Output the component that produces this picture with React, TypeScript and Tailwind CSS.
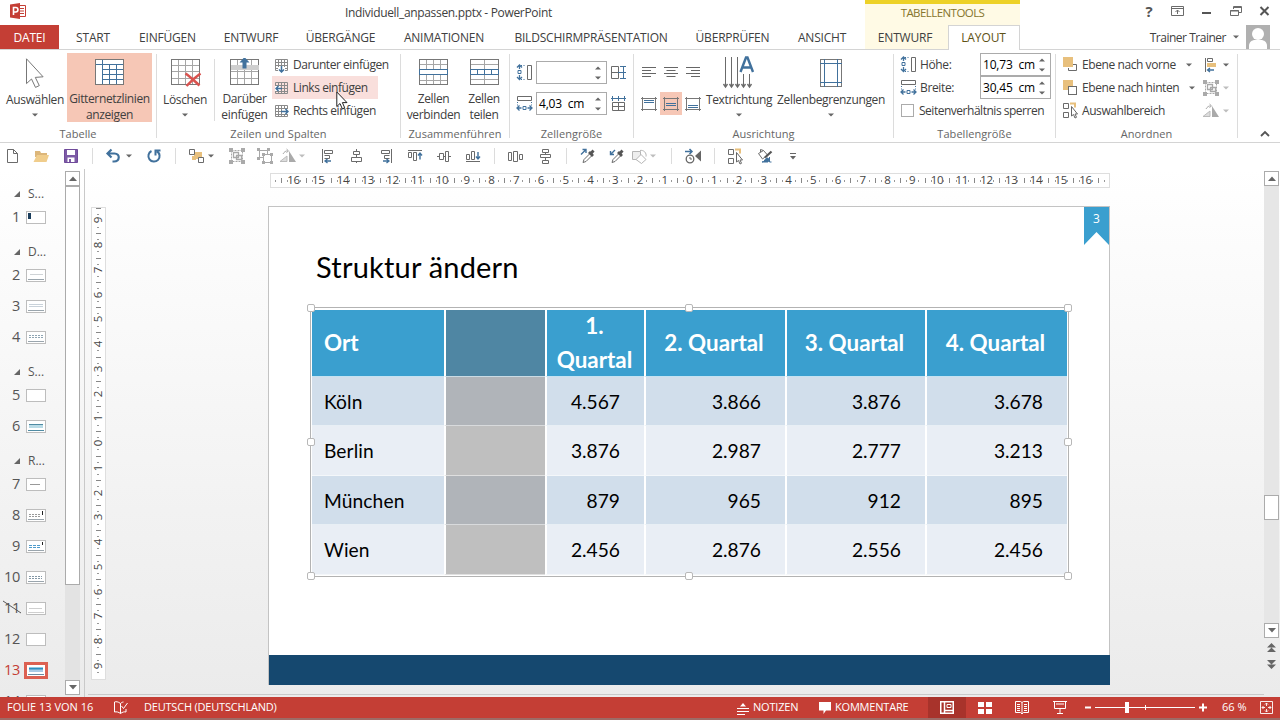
import React from 'react';
import clsx from 'clsx';

const GREY = '#6b6b6b';
const BLUE = '#41719c';
const SAND = '#e8c07d';

/* ---------- small helpers ---------- */

type IconProps = {
  w?: number;
  h?: number;
  className?: string;
  children: React.ReactNode;
};

const Icon: React.FC<IconProps> = ({ w = 16, h = 16, className, children }) => (
  <svg
    width={w}
    height={h}
    viewBox={`0 0 ${w} ${h}`}
    fill="none"
    stroke={GREY}
    className={clsx('block shrink-0', className)}
  >
    {children}
  </svg>
);

const Caret: React.FC<{ className?: string; light?: boolean }> = ({
  className,
  light,
}) => (
  <svg
    width="6"
    height="4"
    viewBox="0 0 6 4"
    className={clsx('block shrink-0', className)}
  >
    <path d="M0 0.4h6L3 3.6z" fill={light ? '#bdbdbd' : '#666'} />
  </svg>
);

/* ---------- ribbon icons ---------- */

const GridIcon: React.FC<{ children?: React.ReactNode; lines?: string }> = ({
  children,
  lines = 'M7.5 1v25M14.5 1v25M21.5 1v25M1 7.5h28M1 13.5h28M1 20.5h28',
}) => (
  <Icon w={32} h={32} className="ml-[3px]">
    <rect x="0.5" y="1.5" width="28" height="25" fill="#fff" stroke="#777" />
    <path d={lines} stroke="#a6a6a6" />
    <rect x="0.5" y="1.5" width="28" height="25" stroke="#777" />
    {children}
  </Icon>
);

const PointerIcon = () => (
  <Icon w={20} h={32}>
    <path
      d="M1.5 0.8v24.8l5-4.6 4 8.4 3.8-1.8-4-8.2 7.8-.6z"
      stroke="#777"
      fill="#fff"
    />
  </Icon>
);

const GridlinesIcon = () => (
  <Icon w={32} h={32} className="ml-[3px]">
    <rect x="0.5" y="1.5" width="28" height="25" fill="#fff" />
    <path
      d="M1 6.5h27M7.5 2v24M14.5 6.5v20M21.5 6.5v20M7.5 11.5H28M7.5 16.5H28M7.5 21.5H28"
      stroke={BLUE}
    />
    <rect x="0.5" y="1.5" width="28" height="25" stroke="#777" />
  </Icon>
);

const DeleteIcon = () => (
  <GridIcon>
    <path
      d="M14.5 15.5c5 3.5 9 7.5 14 12M29.5 15.5c-5 3.5-9.5 7.5-14 12.5"
      stroke="#d9534f"
      strokeWidth="2.6"
    />
  </GridIcon>
);

const InsertAboveIcon = () => (
  <GridIcon>
    <rect x="1" y="7" width="28" height="5" fill="#cfcfcf" stroke="none" />
    <path d="M14.5 -1l5 5.5h-3v6h-4v-6h-3z" fill={BLUE} stroke="none" />
  </GridIcon>
);

const MergeIcon = () => (
  <GridIcon lines="M7.5 2v9M14.5 2v9M21.5 2v9M7.5 17v10M14.5 17v10M21.5 17v10M1 6.5h28M1 22.5h28">
    <rect x="0.5" y="11.5" width="28" height="5" fill="#fff" stroke={BLUE} />
  </GridIcon>
);

const SplitIcon = () => (
  <GridIcon lines="M14.5 2v9M14.5 17v10M1 6.5h28M1 21.5h28">
    <path
      d="M.5 11.5h28v5H.5zM7.5 11.5v5M14.5 11.5v5M21.5 11.5v5"
      stroke={BLUE}
    />
  </GridIcon>
);

const SmallGrid: React.FC<{
  arrow: string;
  x: number;
  y: number;
  w: number;
  h: number;
}> = ({ arrow, x, y, w, h }) => (
  <Icon w={14} h={15}>
    <path
      d="M.5 1.5h12v11H.5zM3.5 1.5v11M6.5 1.5v11M9.5 1.5v11M.5 4.5h12M.5 7.5h12M.5 10.5h12"
      stroke="#8a8a8a"
    />
    <rect x={x} y={y} width={w} height={h} fill="#fff" stroke="none" />
    <path d={arrow} stroke={BLUE} strokeWidth="1.5" />
  </Icon>
);

const RowHeightIcon = () => (
  <Icon w={17} h={17}>
    <path d="M11.5 1.5h4v14h-4z" />
    <path d="M5 1.5h5M5 15.5h5" strokeDasharray="1 1.5" stroke={BLUE} />
    <path d="M2 6.5h3v3H2z" stroke={BLUE} />
    <path
      d="M3.5 5V1M1 3.5L3.5 1 6 3.5M3.5 11v5M1 13l2.5 2.5L6 13"
      stroke={BLUE}
      strokeWidth="1.3"
    />
  </Icon>
);

const ColWidthIcon = () => (
  <Icon w={17} h={17}>
    <path d="M1.5 1.5h14v4h-14z" />
    <path d="M1.5 7v4M15.5 7v4" strokeDasharray="1 1.5" stroke={BLUE} />
    <path d="M7 11.5h3v3H7z" stroke={BLUE} />
    <path
      d="M5.5 13H1M3.5 10.5L1 13l2.5 2.5M11.5 13H16M13.5 10.5L16 13l-2.5 2.5"
      stroke={BLUE}
      strokeWidth="1.3"
    />
  </Icon>
);

const DistributeRowsIcon = () => (
  <Icon w={17} h={17}>
    <path d="M1.5 2.5h7v12h-7zM1.5 8.5h7" />
    <path d="M10 2.5h6M8 8.5h8M10 14.5h6M13.5 2v13" stroke={BLUE} />
  </Icon>
);

const DistributeColsIcon = () => (
  <Icon w={17} h={17}>
    <path d="M2.5 7.5h12v8h-12zM8.5 7.5v8M2.5 11.5h12" />
    <path d="M2.5 1v5M8.5 1v5M14.5 1v5M1 3.5h15" stroke={BLUE} />
  </Icon>
);

const AlignLines: React.FC<{ d: string }> = ({ d }) => (
  <Icon w={16} h={14}>
    <path d={d} stroke="#666" />
  </Icon>
);

const VAlign: React.FC<{ d: string }> = ({ d }) => (
  <Icon w={16} h={16}>
    <path d="M1.5 1v14M14.5 1v14M0 2.5h16M0 13.5h16" stroke="#777" />
    <path d={d} stroke={BLUE} />
  </Icon>
);

const TextDirectionIcon = () => (
  <Icon w={34} h={34}>
    <path d="M3.5 1v29M9.5 1v29M15.5 1v29M21.5 18v12M27.5 18v12" />
    <path
      d="M1.5 28l2 3 2-3M7.5 28l2 3 2-3M13.5 28l2 3 2-3M19.5 28l2 3 2-3M25.5 28l2 3 2-3"
      strokeWidth="1.4"
    />
    <path
      d="M18.5 16L24 1.5h1.5L31 16M20.5 11.500h8.500"
      stroke={BLUE}
      strokeWidth="2.4"
    />
  </Icon>
);

const MarginsIcon = () => (
  <Icon w={25} h={32}>
    <rect x="1.5" y="1.5" width="21" height="27" stroke="#777" fill="#fff" />
    <path d="M5.5 1v28M18.5 1v28M1 5.5h22M1 24.5h22" stroke={BLUE} />
  </Icon>
);

const BringForwardIcon = () => (
  <Icon w={17} h={16}>
    <path d="M6.5 11v2.5h8v-6h-4" />
    <rect x="1" y="0" width="10" height="10" fill={SAND} stroke="none" />
  </Icon>
);

const SendBackwardIcon = () => (
  <Icon w={17} h={16}>
    <rect x="1" y="0" width="10" height="10" fill={SAND} stroke="none" />
    <rect x="6.5" y="6.5" width="8" height="8" fill="#fff" />
  </Icon>
);

const SelectionPaneIcon = () => (
  <Icon w={17} h={17}>
    <path d="M1.5 1.5h5v5h-5zM1.5 10.5h5v5h-5z" />
    <path d="M8 1.5h5v4" stroke={SAND} strokeWidth="2" />
    <path
      d="M9.5 4.5v9.5l2-1.5 1.5 3.5 1.5-.7-1.5-3.3h2.5z"
      fill="#fff"
      stroke="#666"
    />
  </Icon>
);

const AlignObjectsIcon = () => (
  <Icon w={16} h={16}>
    <path d="M2.5 1v14M4.5 1.5h5v3h-5z" />
    <rect x="4" y="6" width="9" height="4" fill={SAND} stroke="none" />
    <path d="M11 13H5M7 11l-2.5 2L7 15" stroke={BLUE} strokeWidth="1.3" />
  </Icon>
);

const GroupIcon = () => (
  <Icon>
    <g stroke="#a8a8a8">
      <path d="M2.5 2.5h11v11h-11z" strokeDasharray="2 1" />
      <path d="M4.5 4.5h5v5h-5zM7.5 7.5h5v4h-5z" strokeWidth="1.3" />
      <path
        d="M0 0h4v4H0zM12 0h4v4h-4zM0 12h4v4H0zM12 12h4v4h-4z"
        fill="#aaa"
        stroke="none"
      />
    </g>
  </Icon>
);

const RegroupIcon = () => (
  <Icon>
    <g stroke="#a8a8a8">
      <path d="M2.5 2.5h8v7h-8z" />
      <path d="M6.5 6.5h8v8h-8z" fill="#fff" />
      <path
        d="M0 0h3v3H0zM10 0h3v3h-3zM0 9h3v3H0zM5 5h3v3H5zM13 5h3v3h-3zM5 13h3v3H5zM13 13h3v3h-3z"
        fill="#aaa"
        stroke="none"
      />
    </g>
  </Icon>
);

const RotateIcon = () => (
  <Icon>
    <path d="M0 13.5h7V8z" fill="#ddd" stroke="#bbb" />
    <path d="M9 3v11h7z" fill="#aaa" stroke="none" />
    <path d="M3 6c1-2 3-3.5 5-3M6.5 1l2 1.8-2 2" stroke="#aaa" />
  </Icon>
);

/* ---------- title bar and tabs ---------- */

const TitleBar = () => (
  <header className="flex h-[25px] items-stretch">
    <div className="w-[345px] pl-[9px] pt-[2px]">
      <Icon w={18} h={18}>
        <path d="M8 3.5h8.5v11H8" fill="#fff" stroke="#c43e35" />
        <path d="M11 6.5h4M11 9h4M11 11.5h4" stroke="#c43e35" />
        <path d="M1 2.5L11 1v16L1 15.5z" fill="#c43e35" stroke="none" />
        <path
          d="M4.5 13V5.5h2.2a2.2 2.2 0 0 1 0 4.5H4.5"
          stroke="#fff"
          strokeWidth="1.6"
        />
      </Icon>
    </div>
    <div className="w-[520px] pt-[5px] leading-4 tracking-[-0.33px]">
      Individuell_anpassen.pptx - PowerPoint
    </div>
    <div className="w-[155px] border-t-4 border-[#edd127] bg-[#fffae5] pt-px text-center text-[11.5px] leading-4 tracking-[-0.56px] text-[#86752c]">
      TABELLENTOOLS
    </div>
    <div className="flex flex-1 items-start justify-end gap-[13px] pr-[7px] pt-[3px]">
      <span className="w-4 text-center text-[15px] font-bold leading-4 text-[#555]">
        ?
      </span>
      <Icon>
        <path d="M1.5 3.5h12v9h-12zM1.5 5.5h12M7.5 11V7M5.5 9l2-2 2 2" />
      </Icon>
      <Icon>
        <path d="M3 10h9" stroke="#555" strokeWidth="2" />
      </Icon>
      <Icon>
        <path d="M5.5 6V3.5h8v6H11M5 4.5h9M2.5 7.5h8v5h-8zM2 8h9" />
      </Icon>
      <Icon>
        <path d="M3.5 4l8 8M11.500 4l-8 8" stroke="#555" strokeWidth="2" />
      </Icon>
    </div>
  </header>
);

const tabs = [
  { label: 'START', width: 'w-[70px]' },
  { label: 'EINFÜGEN', width: 'w-[79px]' },
  { label: 'ENTWURF', width: 'w-[88px]' },
  { label: 'ÜBERGÄNGE', width: 'w-[91px]' },
  { label: 'ANIMATIONEN', width: 'w-[116px]' },
  { label: 'BILDSCHIRMPRÄSENTATION', width: 'w-[178px]' },
  { label: 'ÜBERPRÜFEN', width: 'w-[105px]' },
  { label: 'ANSICHT', width: 'w-[74px]' },
];

const TabBar = () => (
  <nav className="flex h-[25px] border-b border-[#d4d4d4] text-center leading-[25px] tracking-[-0.2px]">
    <div className="w-[59px] bg-[#c43e35] text-white">DATEI</div>
    {tabs.map((tab, i) => (
      <div
        key={tab.label}
        className={clsx('whitespace-nowrap', tab.width, i === 0 && '-ml-px')}
      >
        {tab.label}
      </div>
    ))}
    <div className="ml-[6px] w-[83px] bg-[#fffae5] pr-[3px]">ENTWURF</div>
    <div className="h-[25px] w-[72px] border-x border-t border-[#d4d4d4] bg-white pr-px leading-[23px] tracking-[-0.1px] text-[#5f5216]">
      LAYOUT
    </div>
    <div className="flex flex-1 items-center justify-end pr-[10px]">
      <span className="tracking-[-0.48px]">Trainer Trainer</span>
      <Caret className="ml-[7px] mr-[7px]" />
      <svg width="24" height="24" viewBox="0 0 24 24" className="block">
        <rect width="24" height="24" fill="#b0b0b0" />
        <circle cx="12" cy="9" r="6" fill="#fff" />
        <path d="M3 24v-3c0-4 3-6 6-6h6c3 0 6 2 6 6v3z" fill="#fff" />
      </svg>
    </div>
  </nav>
);

/* ---------- ribbon ---------- */

const Group: React.FC<{
  label: string;
  width: string;
  children: React.ReactNode;
}> = ({ label, width, children }) => (
  <section className={clsx('flex h-[92px] shrink-0 py-1', width)}>
    <div className="flex min-w-0 flex-1 flex-col border-r border-[#dcdcdc]">
      <div className="-mt-px flex h-[73px] shrink-0 items-start">
        {children}
      </div>
      <div className="h-4 shrink-0 text-center text-[11px] leading-4 tracking-[0.05px] text-[#666]">
        {label}
      </div>
    </div>
  </section>
);

const BigButton: React.FC<{
  icon: React.ReactNode;
  lines: string[];
  className: string;
}> = ({ icon, lines, className }) => (
  <button
    className={clsx(
      'flex h-[69px] shrink-0 flex-col items-center whitespace-nowrap leading-4',
      className
    )}
  >
    <span className="flex h-[38px] items-start pt-[5px]">{icon}</span>
    <span className="mt-px">{lines[0]}</span>
    {lines[1] ? <span>{lines[1]}</span> : <Caret className="mt-[5px]" />}
  </button>
);

const SpinField: React.FC<{ value?: string }> = ({ value }) => (
  <div className="flex h-[23px] w-[71px] items-center justify-between border border-[#ababab] bg-white pl-[2px] pr-[5px]">
    <span className="whitespace-pre tracking-[-0.2px] text-black">{value}</span>
    <span className="flex flex-col gap-[6px]">
      <Caret className="rotate-180" />
      <Caret />
    </span>
  </div>
);

const insertRows = [
  {
    label: 'Darunter einfügen',
    icon: (
      <SmallGrid
        arrow="M6.5 8v6M4 11.5l2.5 2.5L9 11.5"
        x={3}
        y={9}
        w={7}
        h={6}
      />
    ),
  },
  {
    label: 'Links einfügen',
    icon: (
      <SmallGrid arrow="M7 7.5H1M3.5 5L1 7.5 3.5 10" x={0} y={5} w={5} h={5} />
    ),
  },
  {
    label: 'Rechts einfügen',
    icon: (
      <SmallGrid
        arrow="M6 7.5h7M10.5 5l2.5 2.5-2.5 2.5"
        x={8}
        y={5}
        w={6}
        h={5}
      />
    ),
  },
];

const Ribbon = () => (
  <div className="flex h-[93px] border-b border-[#d4d4d4] bg-white tracking-[-0.36px]">
    <Group label="Tabelle" width="w-[157px]">
      <BigButton
        icon={<PointerIcon />}
        lines={['Auswählen']}
        className="ml-[3px] w-16"
      />
      <BigButton
        icon={<GridlinesIcon />}
        lines={['Gitternetzlinien', 'anzeigen']}
        className="w-[85px] bg-[#f6c7b6]"
      />
    </Group>

    <Group label="Zeilen und Spalten" width="w-[244px]">
      <BigButton icon={<DeleteIcon />} lines={['Löschen']} className="w-14" />
      <div className="ml-px mt-[6px] h-[62px] w-px self-start bg-[#dcdcdc]" />
      <BigButton
        icon={<InsertAboveIcon />}
        lines={['Darüber', 'einfügen']}
        className="ml-px w-[57px]"
      />
      <div className="-ml-px flex flex-col">
        {insertRows.map((row, i) => (
          <div
            key={row.label}
            className={clsx(
              'flex h-[23px] items-center gap-1 whitespace-nowrap pl-[3px] pt-px tracking-[-0.44px]',
              i === 1 && 'w-[106px] bg-[#f9dfdc]'
            )}
          >
            {row.icon}
            <span>{row.label}</span>
          </div>
        ))}
      </div>
    </Group>

    <Group label="Zusammenführen" width="w-[109px]">
      <BigButton
        icon={<MergeIcon />}
        lines={['Zellen', 'verbinden']}
        className="ml-[6px] w-[53px]"
      />
      <BigButton
        icon={<SplitIcon />}
        lines={['Zellen', 'teilen']}
        className="w-[48px]"
      />
    </Group>

    <Group label="Zellengröße" width="w-[124px]">
      <div className="flex flex-col gap-2 pl-[6px] pt-2">
        <div className="flex items-center gap-[3px]">
          <RowHeightIcon />
          <SpinField />
          <DistributeRowsIcon />
        </div>
        <div className="flex items-center gap-[3px]">
          <ColWidthIcon />
          <SpinField value="4,03  cm" />
          <DistributeColsIcon />
        </div>
      </div>
    </Group>

    <Group label="Ausrichtung" width="w-[260px]">
      <div className="grid grid-cols-[22px_22px_22px] grid-rows-[23px_23px] gap-y-2 pl-[4px] pt-2 [&>*]:place-self-center">
        <AlignLines d="M1 1.5h14M1 4.5h9M1 7.5h14M1 10.5h9" />
        <AlignLines d="M1 1.5h14M3.5 4.5h9M1 7.5h14M3.5 10.5h9" />
        <AlignLines d="M1 1.5h14M6 4.5h9M1 7.5h14M6 10.5h9" />
        <VAlign d="M3 4.5h10M3 6.5h10" />
        <span className="flex h-[23px] w-[22px] items-center justify-center bg-[#f6c7b6]">
          <VAlign d="M3 7.5h10M3 9.5h10" />
        </span>
        <VAlign d="M3 9.5h10M3 11.5h10" />
      </div>
      <BigButton
        icon={<TextDirectionIcon />}
        lines={['Textrichtung']}
        className="w-[70px] [&>span:first-child]:pt-[3px]"
      />
      <BigButton
        icon={<MarginsIcon />}
        lines={['Zellenbegrenzungen']}
        className="w-[114px]"
      />
    </Group>

    <Group label="Tabellengröße" width="w-[162px]">
      <div className="flex flex-col pl-[6px]">
        <div className="flex h-[23px] items-center">
          <RowHeightIcon />
          <span className="ml-[3px] w-[60px]">Höhe:</span>
          <SpinField value="10,73  cm" />
        </div>
        <div className="flex h-[23px] items-center">
          <ColWidthIcon />
          <span className="ml-[3px] w-[60px]">Breite:</span>
          <SpinField value="30,45  cm" />
        </div>
        <div className="flex h-[23px] items-center gap-[5px] pl-px">
          <span className="h-[13px] w-[13px] border border-[#ababab] bg-white" />
          <span className="whitespace-nowrap tracking-[-0.48px]">
            Seitenverhältnis sperren
          </span>
        </div>
      </div>
    </Group>

    <Group label="Anordnen" width="w-[182px]">
      <div className="flex w-[147px] flex-col whitespace-nowrap pl-[6px] tracking-[-0.42px]">
        <div className="flex h-[23px] items-center">
          <BringForwardIcon />
          <span className="ml-[3px]">Ebene nach vorne</span>
          <Caret className="ml-[10px]" />
        </div>
        <div className="flex h-[23px] items-center">
          <SendBackwardIcon />
          <span className="ml-[3px]">Ebene nach hinten</span>
          <Caret className="ml-[10px]" />
        </div>
        <div className="flex h-[23px] items-center">
          <SelectionPaneIcon />
          <span className="ml-[3px]">Auswahlbereich</span>
        </div>
      </div>
      <div className="flex flex-col">
        <div className="flex h-[23px] items-center gap-1">
          <AlignObjectsIcon />
          <Caret />
        </div>
        <div className="flex h-[23px] items-center gap-1">
          <GroupIcon />
          <Caret light />
        </div>
        <div className="flex h-[23px] items-center gap-1">
          <RotateIcon />
          <Caret light />
        </div>
      </div>
    </Group>

    <div className="flex flex-1 items-end justify-end pb-[3px] pr-[9px]">
      <Icon w={12} h={10}>
        <path d="M2 7l4-4 4 4" stroke="#555" strokeWidth="1.8" />
      </Icon>
    </div>
  </div>
);

/* ---------- quick access toolbar ---------- */

const Sep = () => <span className="block h-4 w-px bg-[#dcdcdc]" />;

const qat: { ml: string; el: React.ReactNode }[] = [
  {
    ml: 'ml-[4px]',
    el: (
      <Icon>
        <path d="M3.5 1.5h6l4 4v9h-10zM9.5 1.5v4h4" />
      </Icon>
    ),
  },
  {
    ml: 'ml-[13px]',
    el: (
      <Icon>
        <path d="M2 3h5l1 2h6v4H2z" fill="#dcb67a" stroke="none" />
        <path d="M4 7h12l-2.5 7H.5z" fill="#f0cd8c" stroke="none" />
      </Icon>
    ),
  },
  {
    ml: 'ml-[14px]',
    el: (
      <Icon>
        <path d="M1.5 1.5h13v13h-13z" fill="#7d5ba6" stroke="#6f4a9a" />
        <path d="M4 2h8v5H4zM4.5 9.5h7V14h-7z" fill="#fff" stroke="none" />
        <path d="M6 11h2v3H6z" fill="#7d5ba6" stroke="none" />
      </Icon>
    ),
  },
  { ml: 'ml-[13px]', el: <Sep /> },
  {
    ml: 'ml-[12px]',
    el: (
      <Icon>
        <path
          d="M6.5 1.5L2.5 5.5l4 4M3 5.5h6.5c6 0 5.5 8-.5 8H7.5"
          stroke={BLUE}
          strokeWidth="2.2"
        />
      </Icon>
    ),
  },
  { ml: 'ml-[5px]', el: <Caret /> },
  {
    ml: 'ml-[14px]',
    el: (
      <Icon>
        <path
          d="M5.5 3A5.6 5.6 0 1 0 11 3.3M9.5 7.5V2.500h5"
          stroke={BLUE}
          strokeWidth="2"
        />
      </Icon>
    ),
  },
  { ml: 'ml-[13px]', el: <Sep /> },
  {
    ml: 'ml-[12px]',
    el: (
      <Icon>
        <rect x="6" y="4" width="8" height="7" fill={SAND} stroke="none" />
        <path d="M1.5 1.5h5v5h-5zM10.5 9.5h5v5h-5z" fill="#fff" />
        <rect x="4" y="8" width="4" height="4" fill={SAND} stroke="none" />
      </Icon>
    ),
  },
  { ml: 'ml-[4px]', el: <Caret /> },
  { ml: 'ml-[15px]', el: <GroupIcon /> },
  { ml: 'ml-[12px]', el: <RegroupIcon /> },
  { ml: 'ml-[7px]', el: <RotateIcon /> },
  { ml: 'ml-[3px]', el: <Caret light /> },
  {
    ml: 'ml-[14px]',
    el: (
      <Icon>
        <path d="M3.5 1v14M5.5 2.5h8v3h-8zM5.5 7.5h5v3h-5" />
        <path d="M12 13H6M8.5 11L6 13l2.5 2" stroke={BLUE} strokeWidth="1.3" />
      </Icon>
    ),
  },
  {
    ml: 'ml-[13px]',
    el: (
      <Icon>
        <path d="M8.5 1v2M8.5 7v2M8.5 13v2M5.5 3.5h6v3h-6zM3.5 9.5h10v4h-10z" />
      </Icon>
    ),
  },
  {
    ml: 'ml-[14px]',
    el: (
      <Icon>
        <path d="M13.5 1v14M3.5 2.5h8v3h-8zM11.5 7.5h-5v3h5" />
        <path d="M5 13h6M8.5 11l2.5 2-2.5 2" stroke={BLUE} strokeWidth="1.3" />
      </Icon>
    ),
  },
  {
    ml: 'ml-[13px]',
    el: (
      <Icon>
        <path d="M1 2.5h14M1.5 4.5h3v5h-3zM6.5 4.5h3v8h-3z" />
        <path d="M13 11.5V5M11 7.5L13 5l2 2.5" stroke={BLUE} strokeWidth="1.4" />
      </Icon>
    ),
  },
  {
    ml: 'ml-[13px]',
    el: (
      <Icon>
        <path d="M1 8.5h2M7 8.5h2M13 8.5h2M3.5 5.5h4v6h-4zM9.5 3.5h3v10h-3z" />
      </Icon>
    ),
  },
  {
    ml: 'ml-[13px]',
    el: (
      <Icon>
        <path d="M1 13.5h14M1.5 6.5h3v5h-3zM6.5 3.5h3v8h-3z" />
        <path d="M13 4v7M11 8.5l2 2.5 2-2.5" stroke={BLUE} strokeWidth="1.4" />
      </Icon>
    ),
  },
  { ml: 'ml-[13px]', el: <Sep /> },
  {
    ml: 'ml-[12px]',
    el: (
      <Icon>
        <path d="M1.5 4.5h3v8h-3zM6.5 3.5h4v10h-4zM12.5 6.5h3v5h-3z" />
      </Icon>
    ),
  },
  {
    ml: 'ml-[14px]',
    el: (
      <Icon>
        <path d="M5.5 1.5h6v3h-6zM3.5 6.5h10v3h-10zM5.5 12.5h6v3h-6zM8.5 5v1M8.5 10v2" />
      </Icon>
    ),
  },
  { ml: 'ml-[13px]', el: <Sep /> },
  {
    ml: 'ml-[13px]',
    el: (
      <Icon>
        <path d="M3 14.5l1-3 6-6 2 2-6 6z" fill="#fff" />
        <path d="M9 4l4 4M10.5 6l3-3.5" stroke="#555" strokeWidth="2.8" />
        <path d="M1 6.5L5.5 2M2.5 1.5H6V5" stroke={BLUE} strokeWidth="1.4" />
      </Icon>
    ),
  },
  {
    ml: 'ml-[13px]',
    el: (
      <Icon>
        <path d="M3 14.5l1-3 6-6 2 2-6 6z" fill="#fff" />
        <path d="M9 4l4 4M10.5 6l3-3.5" stroke="#555" strokeWidth="2.8" />
        <path d="M6 2L1.5 6.5M1.5 3v3.5H5" stroke={BLUE} strokeWidth="1.4" />
      </Icon>
    ),
  },
  {
    ml: 'ml-[7px]',
    el: (
      <Icon>
        <path d="M.5 3.5h8v8h-8z" stroke="#b5b5b5" fill="#eee" />
        <path d="M4 11.5l5-5 5 5-4.5 4z" stroke="#b5b5b5" fill="#fff" />
        <path d="M8 2.5a5 5 0 0 1 6 6" stroke="#b5b5b5" />
      </Icon>
    ),
  },
  { ml: 'ml-[2px]', el: <Caret light /> },
  { ml: 'ml-[15px]', el: <Sep /> },
  {
    ml: 'ml-[12px]',
    el: (
      <Icon w={17}>
        <circle cx="6" cy="11" r="3.8" stroke="#666" strokeWidth="1.3" />
        <path d="M6 9v2h2" stroke="#666" />
        <path d="M11 8l6-5.5v11z" fill="#666" stroke="none" />
        <path d="M1 3.5h7M5.5 1L8 3.5 5.5 6" stroke={BLUE} strokeWidth="1.5" />
      </Icon>
    ),
  },
  { ml: 'ml-[13px]', el: <Sep /> },
  { ml: 'ml-[12px]', el: <SelectionPaneIcon /> },
  {
    ml: 'ml-[13px]',
    el: (
      <Icon>
        <path d="M1.5 5.5l5-3 4 4.5-5 4zM3.5 4V1.5l3 1" />
        <path d="M8 9.5l6.5-6" stroke="#555" strokeWidth="2.2" />
        <path d="M5 14c3 0 3-4 5-4s3 2 1 4z" fill={BLUE} stroke={BLUE} />
        <path d="M12.5 9v5h2" stroke={BLUE} />
      </Icon>
    ),
  },
  {
    ml: 'ml-[17px]',
    el: (
      <Icon w={6} h={8}>
        <path d="M0 1.5h6" stroke="#666" />
        <path d="M0 4h6L3 7.5z" fill="#666" stroke="none" />
      </Icon>
    ),
  },
];

const QuickAccess = () => (
  <div className="flex h-[26px] items-center bg-white">
    {qat.map((item, i) => (
      <span key={i} className={item.ml}>
        {item.el}
      </span>
    ))}
  </div>
);

/* ---------- thumbnail pane ---------- */

type Thumb = { n: number; art?: React.ReactNode };

const baseLine = <path d="M2 10.5h16" stroke="#9aa5ad" />;

const sections: { name: string; slides: Thumb[] }[] = [
  {
    name: 'S...',
    slides: [
      { n: 1, art: <path d="M2 2h3v6H2z" fill="#1b3d5c" stroke="none" /> },
    ],
  },
  {
    name: 'D...',
    slides: [
      { n: 2, art: <>{baseLine}<path d="M4 5.5h13" stroke="#cfd3d6" /></> },
      {
        n: 3,
        art: <>{baseLine}<path d="M3 4.5h14M3 6.5h14" stroke="#c9d2da" /></>,
      },
      {
        n: 4,
        art: (
          <>
            {baseLine}
            <path d="M3 4.5h14M3 6.5h14" stroke="#8fa5b3" strokeDasharray="2 1" />
          </>
        ),
      },
    ],
  },
  {
    name: 'S...',
    slides: [
      { n: 5 },
      {
        n: 6,
        art: (
          <>
            <path d="M3 4h14v4H3z" fill="#b9dbe6" stroke="none" />
            <path d="M3 4.5h14M2 10.5h16" stroke="#4f8ba3" />
          </>
        ),
      },
    ],
  },
  {
    name: 'R...',
    slides: [
      { n: 7, art: <path d="M4 6.5h10" stroke="#999" /> },
      {
        n: 8,
        art: (
          <>
            {baseLine}
            <path d="M3 5.5h12M3 7.5h12" stroke="#999" strokeDasharray="2 1" />
            <path d="M16.5 2v4" stroke="#222" />
          </>
        ),
      },
      {
        n: 9,
        art: (
          <>
            {baseLine}
            <path d="M3 5.5h12M3 7.5h12" stroke="#4f9ccc" strokeDasharray="3 1" />
            <path d="M16.5 2v3" stroke="#222" />
          </>
        ),
      },
      {
        n: 10,
        art: (
          <>
            {baseLine}
            <path d="M3 5.5h13M3 7.5h13" stroke="#8598a6" strokeDasharray="2 1" />
          </>
        ),
      },
      {
        n: 11,
        art: <path d="M2 10.5h16M3 6.5h13" stroke="#cfcfcf" />,
      },
      { n: 12 },
      {
        n: 13,
        art: (
          <>
            <path d="M3 4h14v4H3z" fill="#a8cbe6" stroke="none" />
            <path d="M3 4.5h14" stroke="#2c8fc0" strokeWidth="2" />
            <path d="M2 10.5h16" stroke="#6b8aa0" />
          </>
        ),
      },
      { n: 14 },
    ],
  },
];

const ThumbBox: React.FC<{ active?: boolean; art?: React.ReactNode }> = ({
  active,
  art,
}) => (
  <div
    className={clsx(
      'flex h-[17px] w-6 items-center justify-center',
      active && 'bg-[#dc6152]'
    )}
  >
    <Icon w={20} h={13}>
      <rect
        x="0.5"
        y="0.5"
        width="19"
        height="12"
        fill="#fff"
        stroke={active ? '#dc6152' : '#bdbdbd'}
      />
      {art}
    </Icon>
  </div>
);

const Arrow: React.FC<{ up?: boolean }> = ({ up }) => (
  <div className="flex h-[15px] w-[15px] shrink-0 items-center justify-center border border-[#ababab] bg-white">
    <svg
      width="8"
      height="5"
      viewBox="0 0 8 5"
      className={clsx(up && 'rotate-180')}
    >
      <path d="M0 0h8L4 4.5z" fill="#666" />
    </svg>
  </div>
);

const ThumbnailPane = () => (
  <aside className="flex w-[85px] shrink-0 border-r border-[#c9c9c9]">
    <div className="h-[528px] w-[65px] overflow-hidden pt-[5.5px] text-[#555]">
      {sections.map((section, i) => (
        <div key={i}>
          <div className="flex h-[27px] items-center gap-2 pl-[14px] pt-[12px]">
            <svg width="6" height="6" viewBox="0 0 6 6">
              <path d="M6 0v6H0z" fill="#666" />
            </svg>
            <span className="leading-4">{section.name}</span>
          </div>
          {section.slides.map((slide) => (
            <div key={slide.n} className="flex h-[31px] items-center gap-1">
              <span
                className={clsx(
                  'relative w-5 text-right text-[14.5px] leading-5 tracking-[-0.3px]',
                  slide.n === 13 && 'text-[#c43e35]'
                )}
              >
                {slide.n}
                {slide.n === 11 && (
                  <svg
                    width="18"
                    height="14"
                    viewBox="0 0 18 14"
                    className="absolute left-[3px] top-[2px]"
                  >
                    <path d="M0 1l18 12" stroke="#555" />
                  </svg>
                )}
              </span>
              <ThumbBox active={slide.n === 13} art={slide.art} />
            </div>
          ))}
        </div>
      ))}
    </div>
    <div className="mt-[2px] flex h-[524px] w-[15px] flex-col bg-[#e3e3e3]">
      <Arrow up />
      <div className="h-[399px] border border-[#ababab] bg-white" />
      <div className="flex-1" />
      <Arrow />
    </div>
  </aside>
);

/* ---------- rulers ---------- */

const ticks = (max: number) =>
  Array.from({ length: max * 2 + 1 }, (_, i) => Math.abs(i - max));

const HRuler = () => (
  <div className="flex h-[15px] w-[840px] items-center justify-center border border-[#dedede] bg-white text-[11.5px] tracking-[-0.3px] text-[#444]">
    <span className="h-[2px] w-[6.2px] border-l border-[#999]" />
    {ticks(16).map((n, i) => (
      <span key={i} className="flex items-center">
        <span className="h-[5px] w-[6.2px] border-l border-[#888]" />
        <span className="h-[2px] w-[6.2px] border-l border-[#999]" />
        <span className="flex w-[6.2px] justify-start">
          <span className="-mt-px flex w-0 justify-center leading-[12px]">
            {n}
          </span>
        </span>
        <span className="h-[2px] w-[6.2px] border-l border-[#999]" />
      </span>
    ))}
    <span className="h-[5px] w-[6.2px] border-l border-[#888]" />
    <span className="h-[2px] w-px bg-[#999]" />
  </div>
);

const VRuler = () => (
  <div className="flex h-[473px] w-[15px] shrink-0 flex-col items-center overflow-hidden border border-[#dedede] bg-white text-[11.5px] text-[#444]">
    {ticks(9).map((n, i) => (
      <span key={i} className="flex flex-col items-center">
        <span className="h-[6.2px] w-[5px] border-t border-[#888]" />
        <span className="h-[6.2px] w-[2px] border-t border-[#999]" />
        <span className="flex h-[6.2px] items-start">
          <span className="flex h-0 -rotate-90 items-center leading-none">
            {n}
          </span>
        </span>
        <span className="h-[6.2px] w-[2px] border-t border-[#999]" />
      </span>
    ))}
  </div>
);

/* ---------- slide ---------- */

const head = ['Ort', '', '1. Quartal', '2. Quartal', '3. Quartal', '4. Quartal'];

const rows = [
  ['Köln', '', '4.567', '3.866', '3.876', '3.678'],
  ['Berlin', '', '3.876', '2.987', '2.777', '3.213'],
  ['München', '', '879', '965', '912', '895'],
  ['Wien', '', '2.456', '2.876', '2.556', '2.456'],
];

const handles = [
  '-left-1 -top-1',
  'left-[374px] -top-1',
  '-right-1 -top-1',
  '-left-1 top-1/2 -translate-y-1/2',
  '-right-1 top-1/2 -translate-y-1/2',
  '-bottom-1 -left-1',
  'left-[374px] -bottom-1',
  '-bottom-1 -right-1',
];

const SlideTable = () => (
  <div className="relative ml-[41px] mt-[20px] w-[759px] border border-[#b3b3b3] px-px pb-px pt-[2px]">
    <div className="grid grid-cols-[132px_101px_99px_141px_140px_142px] grid-rows-[66.5px_repeat(4,49.5px)] text-[19.2px]">
      {head.map((cell, c) => (
        <div
          key={c}
          className={clsx(
            'flex items-center border-b border-white/70 pt-px text-[22.4px] font-bold leading-[34px] text-white',
            c === 0 && 'justify-start pl-[12px]',
            c > 0 &&
              'justify-center border-l-2 border-l-white pr-[3px] text-center',
            c === 1 ? 'bg-[#4f86a3]' : 'bg-[#3a9fcf]',
            c === 2 && 'pl-px'
          )}
        >
          <span className={clsx(c === 2 && 'w-[84px]')}>{cell}</span>
        </div>
      ))}
      {rows.map((row, r) =>
        row.map((cell, c) => (
          <div
            key={`${r}-${c}`}
            className={clsx(
              'flex items-center border-b border-white/50 pt-[3px] text-black',
              c === 0 && 'pl-[12px] tracking-[0.1px]',
              c > 0 && 'justify-end border-l-2 border-l-white pr-[24px]',
              c === 1
                ? r % 2 === 0
                  ? 'bg-[#b0b4b9]'
                  : 'bg-[#bfbfbf]'
                : r % 2 === 0
                  ? 'bg-[#d1deeb]'
                  : 'bg-[#e9eef5]'
            )}
          >
            {cell}
          </div>
        ))
      )}
    </div>
    {handles.map((pos) => (
      <span
        key={pos}
        className={clsx(
          'absolute h-[8px] w-[8px] rounded-[2px] border border-[#b8b8b8] bg-white',
          pos
        )}
      />
    ))}
  </div>
);

const Slide = () => (
  <div className="mt-[18px] flex h-[479px] w-[842px] flex-col border border-b-0 border-[#c3c3c3] bg-white font-['Lato',sans-serif]">
    <div className="flex h-[80px] items-start justify-between">
      <h1 className="pl-[47px] pt-[42px] text-[29px] leading-9 tracking-[0.2px] text-black">
        Struktur ändern
      </h1>
      <div className="h-[38px] w-[25px] bg-[#3a9fcf] pt-1 text-center font-['Open_Sans',sans-serif] leading-4 text-white [clip-path:polygon(0_0,100%_0,100%_100%,50%_66%,0_100%)]">
        3
      </div>
    </div>
    <SlideTable />
    <div className="-mr-px mt-auto h-[30px] bg-[#15486f]" />
  </div>
);

const Workspace = () => (
  <main className="flex flex-1">
    <div className="w-[22px] pl-[6px] pt-[38px]">
      <VRuler />
    </div>
    <div className="flex flex-1 flex-col pl-[161px] pt-1">
      <div className="pl-[2px]">
        <HRuler />
      </div>
      <Slide />
      <div className="-ml-[180px] mt-[9px] border-t border-[#c9c9c9]" />
    </div>
    <div className="mr-px mt-[2px] flex h-[524px] w-[15px] flex-col items-center">
      <div className="flex h-[467px] flex-col bg-[#e6e6e6]">
        <Arrow up />
        <div className="mt-[309px] h-[25px] w-[15px] border border-[#ababab] bg-white" />
        <div className="flex-1" />
        <Arrow />
      </div>
      <Icon w={9} h={9} className="mt-[5px]">
        <path
          d="M0 4.5L4.500 0 9 4.5zM0 9l4.5-4.5L9 9z"
          fill="#666"
          stroke="none"
        />
      </Icon>
      <Icon w={9} h={9} className="mt-[8px]">
        <path
          d="M0 0l4.5 4.5L9 0zM0 4.5L4.500 9 9 4.5z"
          fill="#666"
          stroke="none"
        />
      </Icon>
    </div>
  </main>
);

/* ---------- status bar ---------- */

const StatusBar = () => (
  <footer className="flex h-[23px] items-center whitespace-nowrap border-b-2 border-[#9d6b66] bg-[#c43e35] text-[11px] tracking-[-0.2px] text-white">
    <span className="ml-[7px] w-[106px] tracking-[0px]">FOLIE 13 VON 16</span>
    <Icon w={15} h={15}>
      <path
        d="M7.5 3.5C5 1.5 3 1.5 1.5 2v10c2-.5 4 0 6 1.5V3.5c1-1 2-1.5 3-1.5M7.5 13.5c2-1.5 4-2 5.5-1.5V9M8.5 6l2 2.5 4-5.5"
        stroke="#fff"
      />
    </Icon>
    <span className="ml-[16px] w-[593px]">DEUTSCH (DEUTSCHLAND)</span>
    <Icon w={12} h={14}>
      <path d="M0 7.5h12M0 10.5h12M0 13.5h8" stroke="#fff" />
      <path d="M3 5.5L6 2l3 3.5z" fill="#fff" stroke="none" />
    </Icon>
    <span className="ml-[4px] w-[66px]">NOTIZEN</span>
    <Icon w={12} h={13}>
      <path d="M0 1h12v8.5H7L4.500 13V9.5H0z" fill="#fff" stroke="none" />
    </Icon>
    <span className="ml-[4px] w-[93px]">KOMMENTARE</span>
    <span className="flex h-[21px] w-[38px] items-center justify-center bg-[#a8332b]">
      <Icon w={14} h={15}>
        <path d="M.75 1.75h12.5v11.5H.75z" stroke="#fff" strokeWidth="1.5" />
        <path d="M4.5 2v11M5 10.5h8" stroke="#fff" strokeWidth="1.5" />
        <path d="M7 4.5h4v3H7z" stroke="#fff" />
      </Icon>
    </span>
    <Icon w={14} h={14} className="ml-[12px]">
      <path
        d="M0 1h6v5H0zM8 1h6v5H8zM0 8h6v5H0zM8 8h6v5H8z"
        fill="#fff"
        stroke="none"
      />
    </Icon>
    <Icon w={14} h={15} className="ml-[23px]">
      <path
        d="M7 2.5L5.5 1.5h-5v11h5L7 14l1.5-1.5h5v-11h-5L7 2.5V14M2 4.5h3M2 6.5h3M2 8.5h3M2 10.5h3M9 4.5h3M9 6.5h3M9 8.5h3M9 10.5h3"
        stroke="#fff"
      />
    </Icon>
    <Icon w={14} h={15} className="ml-[24px]">
      <path d="M0 1.5h14M1.5 2v6.5h11V2M7 9v4M4 13.5h6M3 4h8" stroke="#fff" />
    </Icon>
    <Icon w={124} h={15} className="ml-[18px]">
      <path d="M0 7.5h6" stroke="#fff" strokeWidth="2" />
      <path d="M10 7.5h100M60.5 5v5" stroke="#fff" />
      <path d="M42 2v11" stroke="#fff" strokeWidth="4" />
      <path d="M114 7.5h8M118 3.5v8" stroke="#fff" strokeWidth="2" />
    </Icon>
    <span className="ml-[13px] w-[38px] tracking-[0px]">66 %</span>
    <Icon w={14} h={15}>
      <path
        d="M.5 1.5h12v12H.5zM6.5 3v3M5 4.5L6.5 3 8 4.5M6.5 12V9M5 10.5L6.5 12 8 10.5M2 7.5h3M3.5 6L2 7.5 3.5 9M11 7.5H8M9.5 6L11 7.5 9.5 9"
        stroke="#fff"
        strokeWidth="0.9"
      />
    </Icon>
  </footer>
);

const App: React.FC = () => (
  <div className="relative flex h-[720px] w-[1280px] flex-col overflow-hidden bg-white font-['Open_Sans','Noto_Sans',sans-serif] text-[12px] text-[#404040]">
    <TitleBar />
    <TabBar />
    <Ribbon />
    <QuickAccess />
    <div className="flex h-[528px] bg-gradient-to-b from-white to-[#ebebeb]">
      <ThumbnailPane />
      <Workspace />
    </div>
    <StatusBar />

    {/* mouse pointer */}
    <svg
      width="13"
      height="19"
      viewBox="0 0 13 19"
      className="absolute left-[336px] top-[91px]"
    >
      <path
        d="M.8 1v14.5l3.2-3 2.3 5.3 2.4-1-2.3-5.2h4.6z"
        fill="#fff"
        stroke="#222"
      />
    </svg>
  </div>
);

export default App;
